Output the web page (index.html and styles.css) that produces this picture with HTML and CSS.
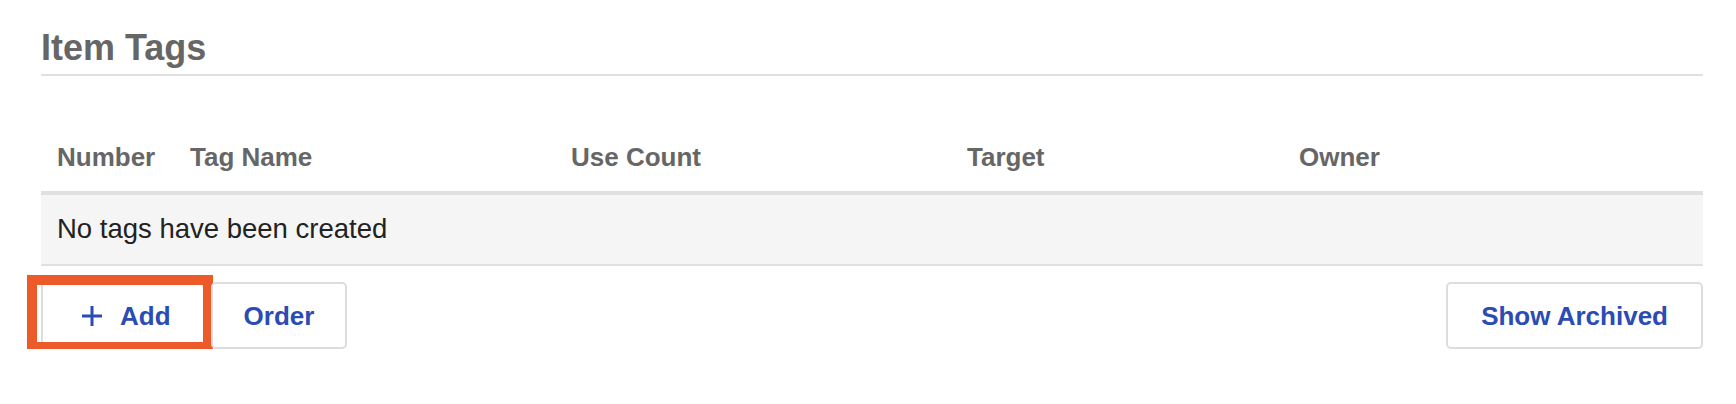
FILE: index.html
```html
<!DOCTYPE html>
<html lang="en">
<head>
<meta charset="utf-8">
<title>Item Tags</title>
<link rel="stylesheet" href="styles.css">
</head>
<body>
<div class="page">
  <h2 class="title">Item Tags</h2>
  <div class="table">
    <div class="row head">
      <div class="cell">Number</div>
      <div class="cell">Tag Name</div>
      <div class="cell">Use Count</div>
      <div class="cell">Target</div>
      <div class="cell">Owner</div>
    </div>
    <div class="empty">No tags have been created</div>
  </div>
  <div class="actions">
    <div class="group">
      <button class="btn btn-add" type="button">
        <svg class="plus" width="22" height="22" viewBox="0 0 22 22" aria-hidden="true"><path d="M11 1v20M1 11h20" stroke="currentColor" stroke-width="3" fill="none"/></svg>
        <span>Add</span>
        <span class="highlight"></span>
      </button>
      <button class="btn btn-order" type="button">Order</button>
    </div>
    <button class="btn btn-archived" type="button">Show Archived</button>
  </div>
</div>
</body>
</html>
```
FILE: styles.css
```css
html, body {
  margin: 0;
  padding: 0;
  background: #ffffff;
}

.page {
  padding: 26px 33px 0 41px;
  font-family: "Liberation Sans", Arial, sans-serif;
}

.title {
  margin: 0;
  padding-bottom: 4px;
  font-size: 36px;
  line-height: 44px;
  font-weight: 700;
  color: #666666;
  border-bottom: 2px solid #e0e0e0;
}

.table {
  margin-top: 65px;
}

.row {
  display: grid;
  grid-template-columns: 133px 381px 396px 332px 1fr;
}

.head .cell {
  padding: 0 16px 18px;
  font-size: 26px;
  line-height: 32px;
  font-weight: 700;
  color: #666666;
}

.empty {
  background: #f5f5f5;
  border-top: 4px solid #e0e0e0;
  border-bottom: 2px solid #e0e0e0;
  padding: 18px 16px 19px;
  font-size: 27.5px;
  line-height: 32px;
  color: #222222;
}

.actions {
  margin-top: 16px;
  display: flex;
  justify-content: space-between;
  align-items: center;
}

.group {
  display: flex;
  gap: 6px;
}

.btn {
  position: relative;
  display: flex;
  align-items: center;
  gap: 17px;
  height: 67px;
  padding: 0 32px;
  background: #ffffff;
  border: 2px solid #dddddd;
  border-radius: 5px;
  font-family: "Liberation Sans", Arial, sans-serif;
  font-size: 26px;
  line-height: 32px;
  font-weight: 700;
  color: #2b4bb5;
  cursor: pointer;
}

.btn-add {
  padding: 0 32px 0 38px;
}

.btn-order {
  padding: 0 31px;
}

.btn-archived {
  padding: 0 33px;
}

.plus {
  display: block;
  flex: none;
}

.highlight {
  position: absolute;
  left: -16px;
  top: -9px;
  width: 186px;
  height: 77px;
  box-sizing: border-box;
  border: 10px solid #ec5a29;
  pointer-events: none;
}
```
